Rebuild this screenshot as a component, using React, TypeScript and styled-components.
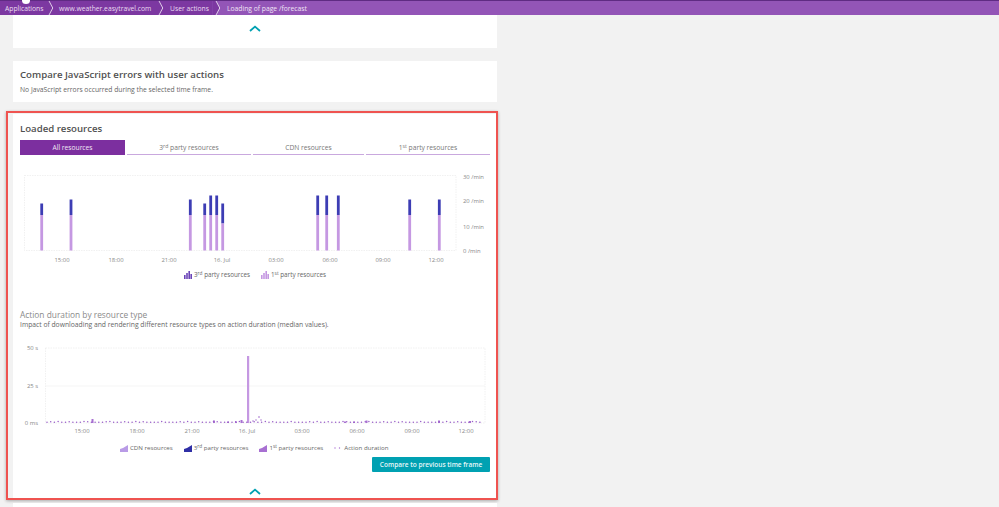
import styled, { createGlobalStyle } from 'styled-components';

const GlobalStyle = createGlobalStyle`
  html, body {
    margin: 0;
    padding: 0;
    background: #f2f2f2;
  }
  * {
    box-sizing: border-box;
  }
`;

const FONT = '"Open Sans", "Liberation Sans", sans-serif';
const TEAL = '#00a1b2';
const DARK_BLUE = '#3d3db4';
const LIGHT_PURPLE = '#c598e2';
const MID_PURPLE = '#a870d2';

const bars = [
  { x: 41.7, top: 203.5, split: 215 },
  { x: 71, top: 199.5, split: 215 },
  { x: 190.3, top: 199.5, split: 215 },
  { x: 204.7, top: 203.5, split: 215 },
  { x: 210.7, top: 195.5, split: 215 },
  { x: 216.7, top: 195.5, split: 215 },
  { x: 222.7, top: 203.5, split: 223.5 },
  { x: 317.7, top: 195.5, split: 215 },
  { x: 326.7, top: 195.5, split: 215 },
  { x: 338.3, top: 195.5, split: 215 },
  { x: 409.7, top: 199.5, split: 215 },
  { x: 439.3, top: 199.5, split: 215 },
];

const topTicks = [
  { x: 62, t: '15:00' },
  { x: 116, t: '18:00' },
  { x: 169, t: '21:00' },
  { x: 222, t: '16. Jul' },
  { x: 276, t: '03:00' },
  { x: 330, t: '06:00' },
  { x: 383, t: '09:00' },
  { x: 436, t: '12:00' },
];

const bottomTicks = [
  { x: 82, t: '15:00' },
  { x: 137, t: '18:00' },
  { x: 192, t: '21:00' },
  { x: 247, t: '16. Jul' },
  { x: 302, t: '03:00' },
  { x: 357, t: '06:00' },
  { x: 412, t: '09:00' },
  { x: 466, t: '12:00' },
];

// dots of the action duration series, roughly one every 3.7px
const dots = Array.from({ length: 118 }, (_, i) => {
  const x = 47 + i * 3.7;
  return { x, y: 422.3 - (i % 7 === 3 ? 0.9 : i % 5 === 1 ? 0.5 : 0) };
});

const bumps = [
  { x: 92.5, h: 4 },
  { x: 214, h: 2.5 },
  { x: 228, h: 1.5 },
  { x: 236, h: 1.5 },
  { x: 241.5, h: 3 },
  { x: 345, h: 1.5 },
  { x: 354, h: 1.5 },
  { x: 366.5, h: 2.5 },
  { x: 439, h: 2.5 },
  { x: 470, h: 2 },
];

const Chevron = () => (
  <ChevronIcon viewBox="0 0 12 7">
    <path d="M1 6 L6 1.6 L11 6" fill="none" stroke={TEAL} strokeWidth="1.8" />
  </ChevronIcon>
);

const CrumbEdge = ({ last }: { last?: boolean }) => (
  <CrumbEdgeIcon viewBox="0 0 9 15" $last={last}>
    {last && <polygon points="0,0 4,0 8,7.5 4,15 0,15" fill="#7c38a1" />}
    <polyline points="4,0 8,7.5 4,15" fill="none" stroke="#fff" strokeWidth="0.8" />
  </CrumbEdgeIcon>
);

const BarGlyph = ({ color }: { color: string }) => (
  <LegendIcon viewBox="0 0 8 8">
    <path d="M0 4h1.6v4H0zM2.2 2h1.6v6H2.2zM4.4 0h1.6v8H4.4zM6.4 3H8v5H6.4z" fill={color} />
  </LegendIcon>
);

const AreaGlyph = ({ color }: { color: string }) => (
  <LegendIcon viewBox="0 0 8 8">
    <path d="M0 8V5l3-1 5-3v7z" fill={color} />
  </LegendIcon>
);

const DotsGlyph = () => (
  <LegendIcon viewBox="0 0 8 8">
    <circle cx="1" cy="4" r="0.7" fill={MID_PURPLE} />
    <circle cx="5.5" cy="4" r="0.7" fill={MID_PURPLE} />
  </LegendIcon>
);

const ThirdParty = () => (
  <span>
    3<sup>rd</sup> party resources
  </span>
);

const FirstParty = () => (
  <span>
    1<sup>st</sup> party resources
  </span>
);

const App = () => {
  return (
    <Page>
      <GlobalStyle />
      <Breadcrumb>
        <CursorBlob />
        <Crumb $pad="5px" $width="40px">Applications</Crumb>
        <CrumbEdge />
        <Crumb $pad="5px" $width="96px">www.weather.easytravel.com</Crumb>
        <CrumbEdge />
        <Crumb $pad="6px" $width="42px">User actions</Crumb>
        <CrumbEdge last />
        <Crumb $pad="6px" $width="90px" $current>Loading of page /forecast</Crumb>
      </Breadcrumb>

      <Column>
        <CollapseCard>
          <Chevron />
        </CollapseCard>

        <ErrorsCard>
          <CardTitle>Compare JavaScript errors with user actions</CardTitle>
          <Muted>No JavaScript errors occurred during the selected time frame.</Muted>
        </ErrorsCard>

        <Highlight>
          <ResourcesCard>
            <CardTitle>Loaded resources</CardTitle>
            <Tabs>
              <Tab $active $width="105px">All resources</Tab>
              <Tab $width="124px"><ThirdParty /></Tab>
              <Tab $width="111px">CDN resources</Tab>
              <Tab $width="124px"><FirstParty /></Tab>
            </Tabs>

            <ChartSvg viewBox="20 170 470 95" $height={95}>
              <rect x="24.5" y="175.5" width="431.5" height="75" fill="none" stroke="#eeeeee" strokeWidth="0.8" strokeDasharray="1.5 1" />
              {bars.map((b) => (
                <g key={b.x}>
                  <rect x={b.x - 1.4} y={b.top} width="2.8" height={b.split - b.top} fill={DARK_BLUE} />
                  <rect x={b.x - 1.4} y={b.split} width="2.8" height={250.5 - b.split} fill={LIGHT_PURPLE} />
                </g>
              ))}
              {[
                { y: 178.5, t: '30 /min' },
                { y: 203, t: '20 /min' },
                { y: 228.5, t: '10 /min' },
                { y: 252.5, t: '0 /min' },
              ].map((l) => (
                <AxisText key={l.t} x="463" y={l.y}>{l.t}</AxisText>
              ))}
              {topTicks.map((l) => (
                <AxisText key={l.t} x={l.x} y="261.5" textAnchor="middle">{l.t}</AxisText>
              ))}
            </ChartSvg>

            <Legend $left="164px">
              <LegendItem><BarGlyph color="#6b45b8" /><ThirdParty /></LegendItem>
              <LegendItem><BarGlyph color={LIGHT_PURPLE} /><FirstParty /></LegendItem>
            </Legend>

            <SectionTitle>Action duration by resource type</SectionTitle>
            <SectionNote>Impact of downloading and rendering different resource types on action duration (median values).</SectionNote>

            <ChartSvg viewBox="20 342 470 94" $height={94} $top="13px">
              <rect x="45.5" y="348" width="439.5" height="75" fill="none" stroke="#eeeeee" strokeWidth="0.8" strokeDasharray="1.5 1" />
              <line x1="45.5" x2="485" y1="386" y2="386" stroke="#f3f3f3" strokeWidth="0.8" />
              <rect x="247" y="356" width="2.2" height="67" fill={LIGHT_PURPLE} />
              {bumps.map((b) => (
                <rect key={b.x} x={b.x - 1} y={423 - b.h} width="2" height={b.h} fill={MID_PURPLE} />
              ))}
              {dots.map((d) => (
                <circle key={d.x} cx={d.x} cy={d.y} r="0.75" fill="#9a5fc8" />
              ))}
              <circle cx="253" cy="421" r="0.7" fill="#9a5fc8" />
              <circle cx="256" cy="420" r="0.7" fill="#9a5fc8" />
              <circle cx="259" cy="417" r="0.8" fill="#9a5fc8" />
              <circle cx="261" cy="420" r="0.7" fill="#9a5fc8" />
              {[
                { y: 349.8, t: '50 s' },
                { y: 387.8, t: '25 s' },
                { y: 424.8, t: '0 ms' },
              ].map((l) => (
                <AxisText key={l.t} x="38" y={l.y} textAnchor="end">{l.t}</AxisText>
              ))}
              {bottomTicks.map((l) => (
                <AxisText key={l.t} x={l.x} y="432.8" textAnchor="middle">{l.t}</AxisText>
              ))}
            </ChartSvg>

            <Legend $left="100px" $top="7px" $size="6.15px">
              <LegendItem><AreaGlyph color="#b99be6" />CDN resources</LegendItem>
              <LegendItem><AreaGlyph color="#2f2fa6" /><ThirdParty /></LegendItem>
              <LegendItem><AreaGlyph color={MID_PURPLE} /><FirstParty /></LegendItem>
              <LegendItem><DotsGlyph />Action duration</LegendItem>
            </Legend>

            <ButtonRow>
              <CompareButton>Compare to previous time frame</CompareButton>
            </ButtonRow>

            <FooterChevron>
              <Chevron />
            </FooterChevron>
          </ResourcesCard>
        </Highlight>

        <NextCard />
      </Column>
    </Page>
  );
};
export default App;

const Page = styled.div`
  position: relative;
  width: 999px;
  height: 507px;
  overflow: hidden;
  background: #f2f2f2;
  font-family: ${FONT};
`;

const Breadcrumb = styled.nav`
  position: relative;
  display: flex;
  align-items: stretch;
  height: 15px;
  background: #9355b7;
  border-top: 1px solid #5f2b83;
  color: #fff;
`;

const CursorBlob = styled.span`
  position: absolute;
  left: 22px;
  top: -4px;
  width: 8px;
  height: 7px;
  border-radius: 50%;
  background: #fff;
`;

const Crumb = styled.span<{ $pad: string; $width: string; $current?: boolean }>`
  flex: none;
  display: flex;
  align-items: center;
  box-sizing: content-box;
  width: ${(p) => p.$width};
  padding-left: ${(p) => p.$pad};
  background: ${(p) => (p.$current ? 'transparent' : '#7c38a1')};
  color: ${(p) => (p.$current ? '#f0e4f6' : '#eadcf2')};
  font-size: 6.75px;
  white-space: nowrap;
`;

const CrumbEdgeIcon = styled.svg<{ $last?: boolean }>`
  flex: none;
  width: 9px;
  height: 14px;
  background: ${(p) => (p.$last ? 'transparent' : '#7c38a1')};
`;

const Column = styled.main`
  display: flex;
  flex-direction: column;
  width: 484px;
  margin-left: 13px;
`;

const ChevronIcon = styled.svg`
  display: block;
  width: 12px;
  height: 7px;
`;

const CollapseCard = styled.section`
  display: flex;
  justify-content: center;
  height: 33px;
  padding-top: 10px;
  background: #fff;
`;

const ErrorsCard = styled.section`
  height: 41px;
  margin-top: 13px;
  padding: 6.5px 7px 0;
  background: #fff;
`;

const CardTitle = styled.h2`
  margin: 0;
  color: #505050;
  font-size: 9.65px;
  font-weight: 600;
  line-height: 14px;
`;

const Muted = styled.p`
  margin: 3px 0 0;
  color: #666;
  font-size: 6.75px;
  line-height: 10px;
`;

const Highlight = styled.div`
  width: 492px;
  height: 389px;
  margin: 9px 0 0 -7px;
  padding: 1px 0 0 5px;
  border: 2px solid #ef5350;
  box-shadow: 0 1px 3px rgba(0, 0, 0, 0.3);
  background: #f2f2f2;
`;

const ResourcesCard = styled.section`
  display: flex;
  flex-direction: column;
  height: 100%;
  padding: 8px 6px 0 7px;
  background: #fff;
`;

const Tabs = styled.div`
  display: flex;
  gap: 2px;
  margin-top: 4px;
`;

const Tab = styled.div<{ $active?: boolean; $width: string }>`
  display: flex;
  align-items: center;
  justify-content: center;
  gap: 0;
  width: ${(p) => p.$width};
  height: 15px;
  padding-top: 1px;
  background: ${(p) => (p.$active ? '#7c2f9f' : 'transparent')};
  border-bottom: 1px solid ${(p) => (p.$active ? '#7c2f9f' : '#c9a8de')};
  color: ${(p) => (p.$active ? '#f1e8f6' : '#777')};
  font-size: 6.7px;
  white-space: pre;

  sup {
    font-size: 5.2px;
    line-height: 0;
    vertical-align: 2.5px;
  }
`;

const ChartSvg = styled.svg<{ $height: number; $top?: string }>`
  display: block;
  flex: none;
  width: 470px;
  height: ${(p) => p.$height}px;
  margin-top: ${(p) => p.$top || '15px'};
`;

const AxisText = styled.text`
  fill: #888;
  font-family: ${FONT};
  font-size: 5.9px;
`;

const Legend = styled.div<{ $left: string; $top?: string; $size?: string }>`
  display: flex;
  gap: 11px;
  margin: ${(p) => p.$top || '5px'} 0 0 ${(p) => p.$left};
  color: #666;
  font-size: ${(p) => p.$size || '6.3px'};
  line-height: 10px;
  white-space: pre;

  sup {
    font-size: 4.8px;
    line-height: 0;
    vertical-align: 2.5px;
  }
`;

const LegendItem = styled.span`
  display: inline-flex;
  align-items: center;
  white-space: pre;
`;

const LegendIcon = styled.svg`
  flex: none;
  width: 8px;
  height: 8px;
  margin-right: 2px;
`;

const SectionTitle = styled.h3`
  margin: 29px 0 0;
  color: #8a8a8a;
  font-size: 8.35px;
  font-weight: 400;
  line-height: 12px;
`;

const SectionNote = styled.p`
  margin: -1px 0 0;
  color: #666;
  font-size: 6.75px;
  line-height: 9px;
`;

const ButtonRow = styled.div`
  display: flex;
  justify-content: flex-end;
  margin-top: 4px;
`;

const CompareButton = styled.button`
  width: 118px;
  height: 15px;
  padding: 0;
  border: none;
  border-radius: 1px;
  background: ${TEAL};
  color: #e6f7f9;
  font-family: ${FONT};
  font-size: 6.5px;
  font-weight: 600;
`;

const FooterChevron = styled.div`
  display: flex;
  justify-content: center;
  margin-top: 16px;
`;

const NextCard = styled.section`
  height: 20px;
  margin-top: 3px;
  background: #fff;
`;
